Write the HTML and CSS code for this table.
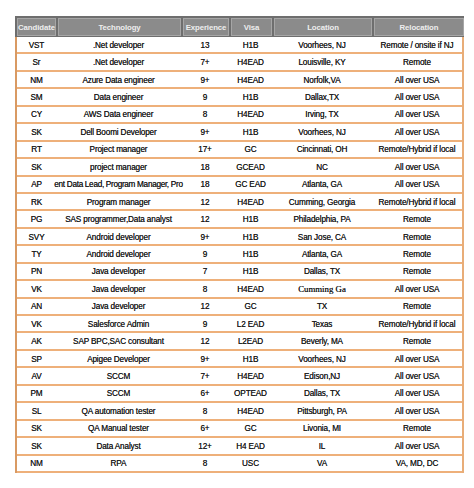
FILE: index.html
```html
<!DOCTYPE html>
<html>
<head>
<meta charset="utf-8">
<link rel="stylesheet" href="styles.css">
</head>
<body>
<div class="sheet">
  <div class="head">
    <div class="hc">Candidate</div>
    <div class="hc">Technology</div>
    <div class="hc">Experience</div>
    <div class="hc">Visa</div>
    <div class="hc">Location</div>
    <div class="hc">Relocation</div>
  </div>
  <div class="body">
    <div class="row"><span>VST</span><span>.Net developer</span><span>13</span><span>H1B</span><span>Voorhees, NJ</span><span>Remote / onsite if NJ</span></div>
    <div class="row"><span>Sr</span><span>.Net developer</span><span>7+</span><span>H4EAD</span><span>Louisville, KY</span><span>Remote</span></div>
    <div class="row"><span>NM</span><span>Azure Data engineer</span><span>9+</span><span>H4EAD</span><span>Norfolk,VA</span><span>All over USA</span></div>
    <div class="row"><span>SM</span><span>Data engineer</span><span>9</span><span>H1B</span><span>Dallax,TX</span><span>All over USA</span></div>
    <div class="row"><span>CY</span><span>AWS Data engineer</span><span>8</span><span>H4EAD</span><span>Irving, TX</span><span>All over USA</span></div>
    <div class="row"><span>SK</span><span>Dell Boomi Developer</span><span>9+</span><span>H1B</span><span>Voorhees, NJ</span><span>All over USA</span></div>
    <div class="row"><span>RT</span><span>Project manager</span><span>17+</span><span>GC</span><span>Cincinnati, OH</span><span>Remote/Hybrid if local</span></div>
    <div class="row"><span>SK</span><span>project manager</span><span>18</span><span>GCEAD</span><span>NC</span><span>All over USA</span></div>
    <div class="row"><span>AP</span><span class="tight">ent Data Lead, Program Manager, Pro</span><span>18</span><span>GC EAD</span><span>Atlanta, GA</span><span>All over USA</span></div>
    <div class="row"><span>RK</span><span>Program manager</span><span>12</span><span>H4EAD</span><span>Cumming, Georgia</span><span>Remote/Hybrid if local</span></div>
    <div class="row"><span>PG</span><span>SAS programmer,Data analyst</span><span>12</span><span>H1B</span><span>Philadelphia, PA</span><span>Remote</span></div>
    <div class="row"><span>SVY</span><span>Android developer</span><span>9+</span><span>H1B</span><span>San Jose, CA</span><span>Remote</span></div>
    <div class="row"><span>TY</span><span>Android developer</span><span>9</span><span>H1B</span><span>Atlanta, GA</span><span>Remote</span></div>
    <div class="row"><span>PN</span><span>Java developer</span><span>7</span><span>H1B</span><span>Dallas, TX</span><span>Remote</span></div>
    <div class="row"><span>VK</span><span>Java developer</span><span>8</span><span>H4EAD</span><span class="serif">Cumming Ga</span><span>All over USA</span></div>
    <div class="row"><span>AN</span><span>Java developer</span><span>12</span><span>GC</span><span>TX</span><span>Remote</span></div>
    <div class="row"><span>VK</span><span>Salesforce Admin</span><span>9</span><span>L2 EAD</span><span>Texas</span><span>Remote/Hybrid if local</span></div>
    <div class="row"><span>AK</span><span>SAP BPC,SAC consultant</span><span>12</span><span>L2EAD</span><span>Beverly, MA</span><span>Remote</span></div>
    <div class="row"><span>SP</span><span>Apigee Developer</span><span>9+</span><span>H1B</span><span>Voorhees, NJ</span><span>All over USA</span></div>
    <div class="row"><span>AV</span><span>SCCM</span><span>7+</span><span>H4EAD</span><span>Edison,NJ</span><span>All over USA</span></div>
    <div class="row"><span>PM</span><span>SCCM</span><span>6+</span><span>OPTEAD</span><span>Dallas, TX</span><span>All over USA</span></div>
    <div class="row"><span>SL</span><span>QA automation tester</span><span>8</span><span>H4EAD</span><span>Pittsburgh, PA</span><span>All over USA</span></div>
    <div class="row"><span>SK</span><span>QA Manual tester</span><span>6+</span><span>GC</span><span>Livonia, MI</span><span>Remote</span></div>
    <div class="row"><span>SK</span><span>Data Analyst</span><span>12+</span><span>H4 EAD</span><span>IL</span><span>All over USA</span></div>
    <div class="row"><span>NM</span><span>RPA</span><span>8</span><span>USC</span><span>VA</span><span>VA, MD, DC</span></div>
  </div>
</div>
</body>
</html>
```
FILE: styles.css
```css
html, body {
  margin: 0;
  padding: 0;
  background: #ffffff;
}
body {
  width: 474px;
  height: 488px;
  overflow: hidden;
  font-family: "Liberation Sans", Arial, sans-serif;
}
.sheet {
  margin: 16px 0 0 15px;
  width: 449px;
}
.head {
  display: grid;
  grid-template-columns: 41px 125px 48px 43px 100px 92px;
  height: 21px;
  background: #6e6e6e;
  box-sizing: border-box;
  padding: 2px 1px 1px 1px;
}
.hc {
  background: #8b8b8b;
  border: 1px solid #a6a6a6;
  margin: 0 1px;
  display: flex;
  align-items: center;
  justify-content: center;
  color: #eeeeee;
  font-size: 7.8px;
  font-weight: bold;
  letter-spacing: -0.1px;
  box-sizing: border-box;
}
.body {
  border-left: 2px solid #d99a63;
  border-right: 2px solid #e8ad78;
  box-sizing: border-box;
}
.row {
  display: grid;
  grid-template-columns: 39px 125px 48px 43px 100px 90px;
  height: 17.44px;
  box-sizing: border-box;
  border-bottom: 2px solid #eeb07a;
  font-size: 8.2px;
  color: #1e1e1e;
  letter-spacing: -0.15px;
  text-shadow: 0 0 0.4px #333333;
}
.row span {
  display: flex;
  align-items: center;
  justify-content: center;
  white-space: nowrap;
  padding-top: 1px;
}
.row span.tight {
  letter-spacing: -0.3px;
}
.row span.serif {
  font-family: "Liberation Serif", "Times New Roman", serif;
  font-size: 8.8px;
  letter-spacing: 0;
}
```
